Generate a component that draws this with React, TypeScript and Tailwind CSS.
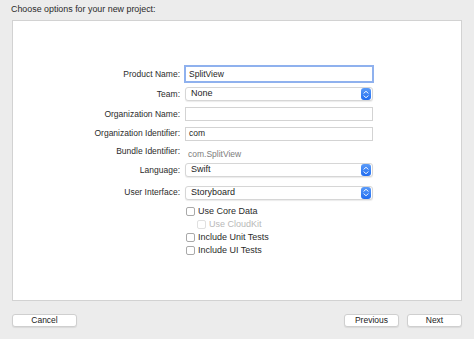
import React from "react";

const font = { fontFamily: '"Liberation Sans", Arial, sans-serif' };

function Stepper() {
  return (
    <span className="flex h-[12px] w-[10px] items-center justify-center rounded-[3px] bg-gradient-to-b from-[#5b9bf8] to-[#1f6cf0]">
      <svg width="6" height="9" viewBox="0 0 6 9" fill="none">
        <path d="M1 3.2 L3 1.2 L5 3.2" stroke="white" strokeWidth="1" strokeLinecap="round" strokeLinejoin="round" />
        <path d="M1 5.8 L3 7.8 L5 5.8" stroke="white" strokeWidth="1" strokeLinecap="round" strokeLinejoin="round" />
      </svg>
    </span>
  );
}

function Row({ label, h, children }: { label: string; h: string; children: React.ReactNode }) {
  return (
    <div className={`flex items-center ${h}`}>
      <div className="w-[168px] pr-[1px] text-right text-[8.5px] text-[#2b2b2b]">{label}</div>
      <div className="ml-[4px] w-[188px]">{children}</div>
    </div>
  );
}

function Select({ value }: { value: string }) {
  return (
    <div className="flex h-[14px] items-center justify-between rounded-[3px] border border-[#d6d6d6] bg-white pl-[5px] pr-[1px] shadow-[0_1px_1px_rgba(0,0,0,0.08)]">
      <span className="text-[9px] text-[#1e1e1e]">{value}</span>
      <Stepper />
    </div>
  );
}

function Input({ value }: { value?: string }) {
  return (
    <div className="flex h-[14px] items-center border border-[#d3d3d3] bg-white pl-[3px] text-[8.5px] text-[#1e1e1e]">
      {value}
    </div>
  );
}

function Check({ label, disabled, indent }: { label: string; disabled?: boolean; indent?: boolean }) {
  return (
    <div className={`flex h-[13px] items-center ${indent ? "pl-[184px]" : "pl-[173px]"}`}>
      <span
        className={`h-[9px] w-[9px] rounded-[2px] border bg-white ${
          disabled ? "border-[#e0e0e0]" : "border-[#a9a9a9]"
        }`}
      />
      <span className={`ml-[3px] text-[9px] ${disabled ? "text-[#b8b8b8]" : "text-[#2b2b2b]"}`}>{label}</span>
    </div>
  );
}

function Button({ label, w }: { label: string; w: string }) {
  return (
    <button
      className={`flex h-[13px] ${w} items-center justify-center rounded-[3px] border border-[#cfcfcf] bg-white text-[8.5px] text-[#222] shadow-[0_1px_1px_rgba(0,0,0,0.08)]`}
    >
      {label}
    </button>
  );
}

export default function App() {
  return (
    <div style={font} className="h-[339px] w-[474px] overflow-hidden bg-[#ececec]">
      {/* Title */}
      <div className="flex h-[20px] items-center pl-[11px] pb-[1px] text-[8.9px] text-[#2a2a2a]">
        Choose options for your new project:
      </div>

      {/* Options panel */}
      <div className="ml-[12px] h-[281px] w-[450px] border border-[#d2d2d2] bg-white pt-[43px]">
        <div className="flex h-[20px] items-center">
          <div className="w-[168px] pr-[1px] text-right text-[8.5px] text-[#2b2b2b]">Product Name:</div>
          <div className="ml-[3px] w-[190px]">
            <div className="flex h-[18px] items-center border-2 border-[#8fb1ee] bg-white pl-[3px] text-[8.5px] text-[#1e1e1e]">
              SplitView
            </div>
          </div>
        </div>
        <Row label="Team:" h="h-[20px]">
          <Select value="None" />
        </Row>
        <Row label="Organization Name:" h="h-[20px]">
          <Input />
        </Row>
        <Row label="Organization Identifier:" h="h-[19px]">
          <Input value="com" />
        </Row>
        <Row label="Bundle Identifier:" h="h-[17px]">
          <span className="pl-[3px] text-[8.5px] text-[#7d7d7d]">com.SplitView</span>
        </Row>
        <Row label="Language:" h="h-[20px]">
          <Select value="Swift" />
        </Row>
        <Row label="User Interface:" h="h-[25px]">
          <Select value="Storyboard" />
        </Row>
        <Check label="Use Core Data" />
        <Check label="Use CloudKit" disabled indent />
        <Check label="Include Unit Tests" />
        <Check label="Include UI Tests" />
      </div>

      {/* Footer buttons */}
      <div className="mt-[13px] flex items-center px-[12px]">
        <Button label="Cancel" w="w-[65px]" />
        <div className="flex-1" />
        <Button label="Previous" w="w-[55px]" />
        <div className="w-[8px]" />
        <Button label="Next" w="w-[55px]" />
      </div>
    </div>
  );
}
